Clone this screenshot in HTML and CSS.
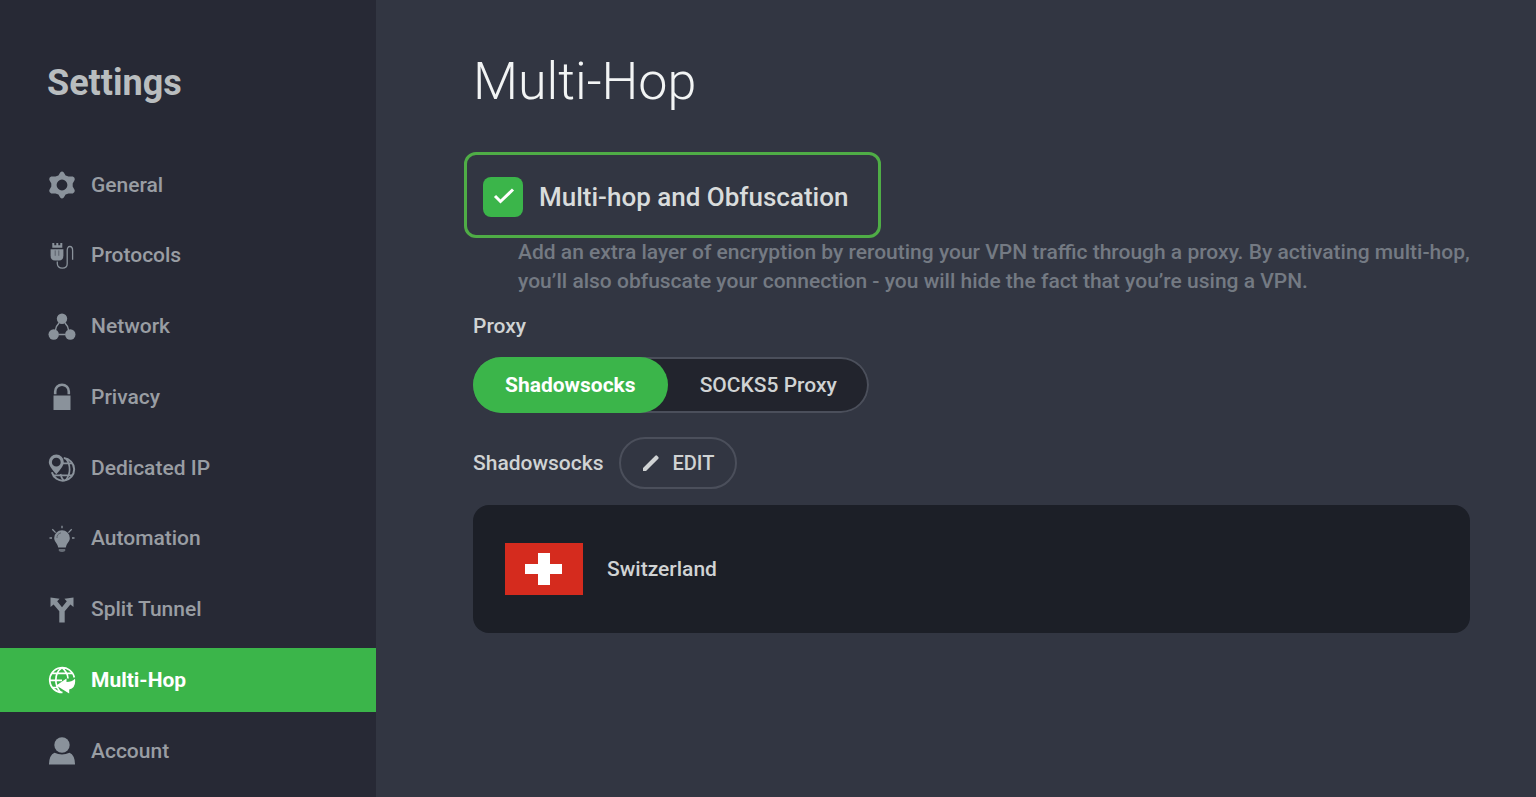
FILE: index.html
```html
<!DOCTYPE html>
<html lang="en">
<head>
<meta charset="utf-8">
<meta name="viewport" content="width=device-width, initial-scale=1">
<title>Settings - Multi-Hop</title>
<link rel="stylesheet" href="styles.css">
</head>
<body>
<div class="app">
  <aside class="sidebar">
    <h2 class="sidebar-title">Settings</h2>
    <nav class="nav" aria-label="Settings">
      <a class="nav-item" href="#general">
        <svg class="nav-icon" viewBox="0 0 28 28" aria-hidden="true"><path fill-rule="evenodd" d="M12.200 1.600Q14-.6 15.800 1.600L17.600 4.400 20.500 5.600 24.800 5.600Q27.600 6.600 26.400 9.400L24.700 12.500V15.500L26.400 18.600Q27.600 21.400 24.800 22.400L20.500 22.400 17.600 23.600 15.800 26.400Q14 28.600 12.200 26.400L10.400 23.600 7.500 22.400 3.200 22.400Q.4 21.400 1.600 18.600L3.300 15.500V12.500L1.600 9.400Q.4 6.600 3.200 5.600L7.500 5.600 10.400 4.400ZM14 8.600A5.400 5.400 0 1 0 14 19.400 5.400 5.400 0 1 0 14 8.600Z"/></svg>
        <span>General</span>
      </a>
      <a class="nav-item" href="#protocols">
        <svg class="nav-icon" viewBox="0 0 28 28" aria-hidden="true"><path d="M4.300 1h2v2.200h2V1h2v2.200h2V1h2v4.800H4.300z"/><path d="M2.600 7.200h12.800v6.200q0 5-4.400 5H7q-4.400 0-4.400-5z"/><path class="cutout" d="M7.200 8.400v5.400M10.800 8.400v5.400"/><path class="line" d="M9.300 19.500v2.200q.4 4.400 5 4.400 4.900 0 4.900-4.400V8.500q0-4 2.700-4t2.700 4v9.200" stroke-width="1.300"/></svg>
        <span>Protocols</span>
      </a>
      <a class="nav-item" href="#network">
        <svg class="nav-icon" viewBox="0 0 28 28" aria-hidden="true"><circle cx="14" cy="5.800" r="5.200"/><circle cx="5.700" cy="21.500" r="5.200"/><circle cx="22.300" cy="21.500" r="5.200"/><path class="line" d="M11 10q-3 3-3.500 7M17 10q3 3 3.500 7M10.500 21.500h7" stroke-width="1.500"/></svg>
        <span>Network</span>
      </a>
      <a class="nav-item" href="#privacy">
        <svg class="nav-icon" viewBox="0 0 28 28" aria-hidden="true"><path d="M5.500 12.500h17V27h-17z"/><path class="line" d="M7.200 11.200V8.500a6.800 6.800 0 0 1 13.600 0v2.700" stroke-width="2.600"/></svg>
        <span>Privacy</span>
      </a>
      <a class="nav-item" href="#dedicated-ip">
        <svg class="nav-icon" viewBox="0 0 28 28" aria-hidden="true"><path class="line" stroke-width="2" d="M15.800 4.100A11.300 11.300 0 1 1 3.900 18.200"/><path class="line" stroke-width="1.700" d="M18 4.600q3.800 4.700 3.600 11.200-.1 5.700-3.800 10.400M14.800 9.300h9.800M5 21.300h19M12.500 20q.6 3.700 3.200 6.500"/><path fill-rule="evenodd" d="M8.300.5a7.500 7.500 0 0 1 7.500 7.500c0 3.200-3 7.100-7.500 12.300C3.800 15.100.8 11.200.8 8A7.500 7.500 0 0 1 8.300.5zm0 3.300a4.400 4.400 0 1 0 0 8.800 4.400 4.400 0 0 0 0-8.800z"/></svg>
        <span>Dedicated IP</span>
      </a>
      <a class="nav-item" href="#automation">
        <svg class="nav-icon" viewBox="0 0 28 28" aria-hidden="true"><path d="M14 5.300a7.800 7.800 0 0 1 7.800 7.800c0 3.400-2.600 5-3.500 7.700l-.5 1.800h-7.600l-.5-1.800c-.9-2.700-3.500-4.300-3.500-7.700A7.800 7.800 0 0 1 14 5.300z"/><path class="cutout" d="M9 13q-.3-4 4-5.200"/><path opacity=".65" d="M10.800 24h6.400v2q-3.200 1.800-6.400 0z"/><path class="line" stroke-width="1.300" d="M14 .8v2.500M4.300 4.300l3.300 3.300M23.700 4.300l-3.300 3.300M1.500 13H4M24 13h2.500"/></svg>
        <span>Automation</span>
      </a>
      <a class="nav-item" href="#split-tunnel">
        <svg class="nav-icon" viewBox="0 0 28 28" aria-hidden="true"><path d="M2.500 1.500 11.600 2.800 9.200 5.300 14 11.300 18.800 5.300 16.400 2.800 25.500 1.500V11.100L22.400 8.400 16.700 15.200V26.500H11.300V15.200L5.600 8.400 2.500 11.100Z"/></svg>
        <span>Split Tunnel</span>
      </a>
      <a class="nav-item nav-item-active" href="#multi-hop" aria-current="page">
        <svg class="nav-icon" viewBox="0 0 28 28" aria-hidden="true"><path class="line" stroke-width="1.700" d="M26.300 11.500A12.400 12.400 0 1 0 14.500 26.400M14 1.600Q7.800 6 7.800 14q0 6.600 4.500 12M14 1.600Q19.600 6 20 12.500M3.200 7.300h21.600M1.600 14.300H14M4 21.500h5"/><path d="M8.300 19.500l10.200-7v3.500q5.300 0 8.500-3.300 1.200 9.300-5.800 10.800V27.500z"/></svg>
        <span>Multi-Hop</span>
      </a>
      <a class="nav-item" href="#account">
        <svg class="nav-icon" viewBox="0 0 28 28" aria-hidden="true"><circle cx="14" cy="8" r="7.700"/><path d="M6.500 15.700q7.500 3.600 15 0 5.500 2.500 5.500 11.800H1q0-9.300 5.500-11.800z"/></svg>
        <span>Account</span>
      </a>
    </nav>
  </aside>

  <main class="content">
    <h1 class="page-title">Multi-Hop</h1>
    <label class="feature">
      <span class="check">
        <input class="check-input" type="checkbox" checked aria-describedby="feature-note">
        <svg class="check-mark" viewBox="0 0 40 40" aria-hidden="true"><path d="M12 19l5.500 5.500L30 12.500"/></svg>
      </span>
      <span>Multi-hop and Obfuscation</span>
    </label>
    <p class="feature-note" id="feature-note">Add an extra layer of encryption by rerouting your VPN traffic through a proxy. By activating multi-hop, you’ll also obfuscate your connection - you will hide the fact that you’re using a VPN.</p>

    <fieldset class="proxy">
      <legend class="proxy-label">Proxy</legend>
      <div class="segments">
        <label class="segment"><input class="segment-input" type="radio" name="proxy" checked><span class="segment-text">Shadowsocks</span></label>
        <label class="segment"><input class="segment-input" type="radio" name="proxy"><span class="segment-text">SOCKS5 Proxy</span></label>
      </div>
    </fieldset>

    <div class="server-head">
      <span>Shadowsocks</span>
      <button class="edit" type="button">
        <svg class="edit-icon" viewBox="0 0 18 18" aria-hidden="true"><path d="M1 14 13.300 1.700q.9-.9 1.800 0l1.200 1.200q.9.900 0 1.800L4 17H1z"/></svg>
        <span>EDIT</span>
      </button>
    </div>

    <section class="server">
      <svg class="flag" viewBox="0 0 78 52" role="img" aria-label="Flag of Switzerland"><path fill="#d52b1e" d="M0 0h78v52H0z"/><path fill="#fff" d="M33 10h12v11h12v10H45v11H33V31H20V21h13z"/></svg>
      <span>Switzerland</span>
    </section>
  </main>
</div>
</body>
</html>
```

FILE: styles.css
```css
* {
  box-sizing: border-box;
}

body {
  margin: 0;
  background: #323642;
  color: #d0d3d4;
  font-family: Roboto, "Liberation Sans", sans-serif;
  font-size: 21px;
  font-weight: 500;
  line-height: 29px;
}

.app {
  display: flex;
  min-height: 100vh;
}

.sidebar {
  display: flex;
  flex-direction: column;
  flex: none;
  width: 376px;
  padding: 61px 0 14px;
  background: #272935;
}

.sidebar-title {
  margin: 0 0 48px;
  padding-left: 47px;
  color: #b9bdbf;
  font-size: 36px;
  font-weight: 700;
  line-height: 44px;
}

.nav {
  display: flex;
  flex: 1;
  flex-direction: column;
  justify-content: space-between;
}

.nav-item {
  display: flex;
  align-items: center;
  gap: 15px;
  height: 64px;
  padding-left: 48px;
  color: #999da3;
  text-decoration: none;
}

.nav-item-active {
  background: #3bb54a;
  color: #fff;
  font-weight: 700;
}

.nav-icon {
  width: 28px;
  height: 28px;
  fill: #8a929b;
  stroke: none;
}

.nav-icon .line {
  fill: none;
  stroke: #8a929b;
}

.nav-icon .cutout {
  fill: none;
  stroke: #5a606a;
  stroke-width: 1;
}

.nav-item-active .nav-icon {
  fill: #fff;
}

.nav-item-active .line {
  stroke: #fff;
}

.content {
  flex: 1;
  min-width: 0;
  padding: 52px 66px 48px 97px;
}

.page-title {
  margin: 0 0 40px;
  color: #f2f4f4;
  font-size: 52px;
  font-weight: 300;
  line-height: 60px;
}

.feature {
  display: flex;
  align-items: center;
  gap: 16px;
  width: fit-content;
  height: 86px;
  margin-left: -9px;
  padding: 3px 30px 0 16px;
  border: 3px solid #4fad46;
  border-radius: 12px;
  color: #d9dcdc;
  font-size: 26px;
  line-height: 36px;
}

.check {
  display: grid;
  width: 40px;
  height: 40px;
}

.check-input,
.check-mark {
  grid-area: 1 / 1;
  width: 40px;
  height: 40px;
  margin: 0;
}

.check-input {
  appearance: none;
  border-radius: 8px;
}

.check-input:checked {
  background: #3bb54a;
}

.check-mark {
  fill: none;
  stroke: #fff;
  stroke-width: 3;
  pointer-events: none;
}

.feature-note {
  margin: 0;
  padding-left: 45px;
  color: #747a83;
}

.proxy {
  margin: 16px 0 0;
  padding: 0;
  border: 0;
}

.proxy-label {
  margin-bottom: 16px;
  padding: 0;
}

.segments {
  display: flex;
  width: fit-content;
  height: 56px;
  border-radius: 28px;
  background: #22242d;
  box-shadow: inset 0 0 0 2px #4b4f5b;
}

.segment {
  display: grid;
}

.segment-input,
.segment-text {
  grid-area: 1 / 1;
}

.segment-input {
  margin: 0;
  appearance: none;
}

.segment-text {
  display: flex;
  align-items: center;
  padding: 0 32px;
  border-radius: 28px;
}

.segment-input:checked + .segment-text {
  background: #3bb54a;
  color: #fff;
  font-weight: 700;
}

.server-head {
  display: flex;
  align-items: center;
  gap: 16px;
  margin: 24px 0 16px;
}

.edit {
  display: flex;
  align-items: center;
  gap: 12px;
  height: 52px;
  padding: 0 21px;
  border: 2px solid #4b4f5b;
  border-radius: 26px;
  background: transparent;
  color: inherit;
  font: inherit;
  font-size: 20px;
}

.edit-icon {
  width: 18px;
  height: 18px;
  fill: #d0d3d4;
}

.server {
  display: flex;
  align-items: center;
  gap: 24px;
  min-height: 128px;
  padding: 32px;
  border-radius: 16px;
  background: #1c1f27;
}

.flag {
  width: 78px;
  height: 52px;
}
```
